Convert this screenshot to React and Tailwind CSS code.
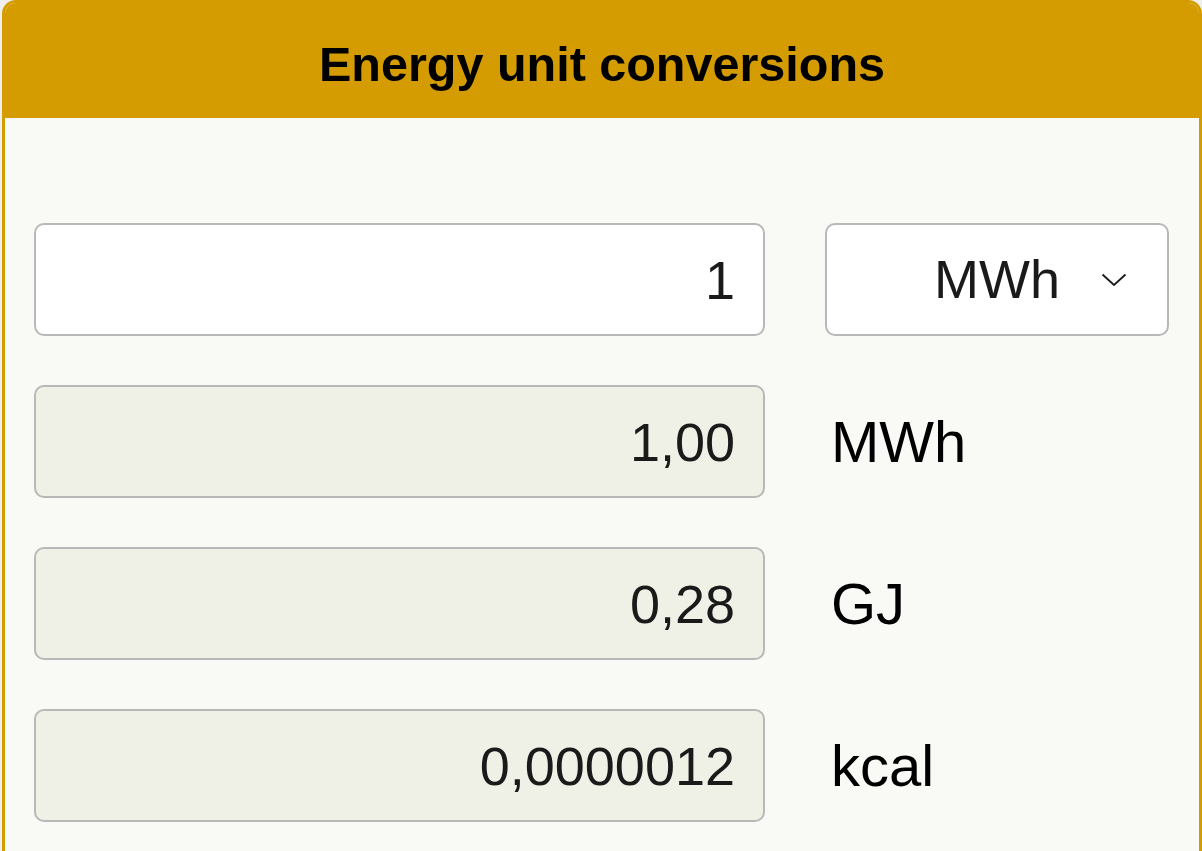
import React, { useState } from 'react'

const units = ['MWh', 'GJ', 'kcal']

export default function App() {
  const [value, setValue] = useState('1')
  const [unit, setUnit] = useState('MWh')

  const rows = [
    { value: '1,00', unit: 'MWh' },
    { value: '0,28', unit: 'GJ' },
    { value: '0,0000012', unit: 'kcal' },
  ]

  return (
    <div className="min-h-screen bg-[#efefef] pl-[2px]" style={{ fontFamily: '"Liberation Sans", Arial, sans-serif' }}>
      <div className="w-[1200px] rounded-t-[14px] border-[3px] border-b-0 border-[#d49c00] bg-[#f9f9f5] overflow-hidden">
        {/* Header */}
        <div className="h-[115px] bg-[#d49c00] flex items-center justify-center">
          <h1 className="text-[48.5px] font-bold text-black leading-none mt-[7px]">Energy unit conversions</h1>
        </div>

        {/* Body */}
        <div className="px-[29px] pt-[105px] pb-[40px] flex flex-col gap-[49px]">
          {/* Input row */}
          <div className="grid grid-cols-[731px_344px] gap-x-[60px]">
            <input
              type="text"
              value={value}
              onChange={(e) => setValue(e.target.value)}
              className="h-[113px] rounded-[10px] border-2 border-[#b8b8b8] bg-white px-[28px] text-right text-[54px] text-[#1a1a1a] outline-none"
            />
            <div className="relative">
              <select
                value={unit}
                onChange={(e) => setUnit(e.target.value)}
                className="appearance-none w-full h-[113px] rounded-[10px] border-2 border-[#b8b8b8] bg-white pl-[10px] pr-[10px] text-center text-[54px] text-[#1a1a1a] outline-none"
              >
                {units.map((u) => (
                  <option key={u} value={u}>{u}</option>
                ))}
              </select>
              <svg className="absolute right-[42px] top-[50px] w-[26px] h-[14px] pointer-events-none" viewBox="0 0 26 14" fill="none" stroke="#1a1a1a" strokeWidth="1.8">
                <path d="M1.5 1.5L13 12L24.5 1.5" />
              </svg>
            </div>
          </div>

          {/* Result rows */}
          {rows.map((r) => (
            <div key={r.unit} className="grid grid-cols-[731px_344px] gap-x-[60px] items-center">
              <input
                type="text"
                readOnly
                value={r.value}
                className="h-[113px] rounded-[10px] border-2 border-[#b8b8b8] bg-[#f0f1e6] px-[28px] text-right text-[54px] text-[#1a1a1a] outline-none"
              />
              <span className="pl-[6px] text-[58px] text-black">{r.unit}</span>
            </div>
          ))}
        </div>
      </div>
    </div>
  )
}
